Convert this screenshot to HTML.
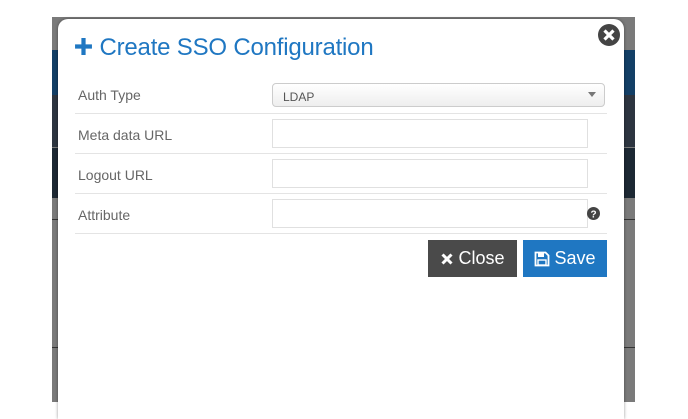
<!DOCTYPE html>
<html><head><meta charset="utf-8"><style>
*{box-sizing:border-box;margin:0;padding:0}
body{width:688px;height:410px;background:#fff;position:relative;overflow:hidden;font-family:"Liberation Sans",sans-serif}
.bg{position:absolute;left:52px;top:17px;width:583px;height:385px;background:#7a7a7a}
.band{position:absolute;left:0;width:100%}
.modal{position:absolute;left:58px;top:19px;width:566px;height:400px;background:#fff;border-radius:10px 10px 0 0;box-shadow:0 0 3px rgba(0,0,0,.4)}
h1{position:absolute;left:16px;top:15px;font-size:24px;font-weight:normal;color:#1f77c2;letter-spacing:-0.2px}
.row{position:absolute;left:17px;width:532px;height:40px;border-bottom:1px solid #e4e4e4}
.lbl{position:absolute;left:3px;top:13px;font-size:14px;color:#666}
.inp{position:absolute;left:197px;top:7px;width:316px;height:29px;border:1px solid #e0e0e0;background:#fff}
.sel{position:absolute;left:197px;top:4px;width:333px;height:24px;border:1px solid #ccc;border-radius:4px;background:linear-gradient(#fff,#eee);font-size:12px;color:#555;padding:6px 10px}
.btn{position:absolute;top:221px;height:37px;color:#fff;font-size:18px;display:flex;align-items:center;justify-content:center;gap:4px}
</style></head><body>
<div class="bg">
<div class="band" style="top:33px;height:45px;background:#133f66"></div>
<div class="band" style="top:78px;height:52px;background:#2d3540"></div>
<div class="band" style="top:131px;height:50px;background:#1c2833"></div>
<div class="band" style="top:202px;height:1px;background:#333"></div>
<div class="band" style="top:330px;height:1px;background:#333"></div>
</div>
<div class="modal">
<h1><svg width="19" height="19" viewBox="0 0 18 18" style="vertical-align:-1px"><path d="M7 1h4v6h6v4h-6v6H7v-6H1V7h6z" fill="#1f77c2"/></svg> Create SSO Configuration</h1>
<svg style="position:absolute;left:539px;top:4px" width="24" height="24" viewBox="0 0 24 24"><circle cx="12" cy="12" r="11" fill="#444"/><path d="M7.5 7.5l9 9M16.5 7.5l-9 9" stroke="#fff" stroke-width="3.2"/></svg>
<div class="row" style="top:55px;height:40px"><span class="lbl" style="top:13px">Auth Type</span><div class="sel" style="top:9px">LDAP<span style="position:absolute;right:8px;top:8px;border:4px solid transparent;border-top:5px solid #777"></span></div></div>
<div class="row" style="top:95px"><span class="lbl">Meta data URL</span><div class="inp" style="top:5px"></div></div>
<div class="row" style="top:135px"><span class="lbl">Logout URL</span><div class="inp" style="top:5px"></div></div>
<div class="row" style="top:175px"><span class="lbl">Attribute</span><div class="inp" style="top:5px"></div>
<svg style="position:absolute;left:512px;top:13px" width="13" height="13" viewBox="0 0 13 13"><circle cx="6.5" cy="6.5" r="6.5" fill="#444"/><text x="6.5" y="10.5" font-size="10" font-weight="bold" fill="#fff" text-anchor="middle" font-family="Liberation Sans">?</text></svg></div>
<div class="btn" style="left:370px;width:89px;background:#4a4a4a"><svg width="14" height="14" viewBox="0 0 14 14"><path d="M2.5 2.5l9 9M11.5 2.5l-9 9" stroke="#fff" stroke-width="3"/></svg>Close</div>
<div class="btn" style="left:465px;width:84px;background:#1f77c2"><svg width="16" height="16" viewBox="0 0 16 16"><path d="M1.5 1.5h10l3 3v10h-13z" fill="none" stroke="#fff" stroke-width="1.8"/><rect x="4" y="2" width="6" height="4" fill="#fff"/><rect x="4" y="9" width="8" height="5" fill="none" stroke="#fff" stroke-width="1.4"/></svg>Save</div>
</div>
</body></html>
